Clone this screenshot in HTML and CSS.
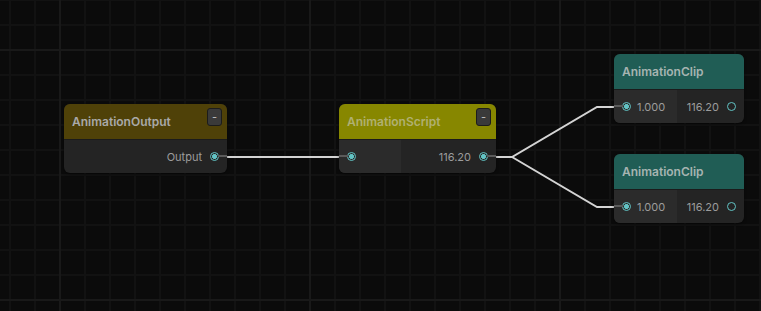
FILE: index.html
```html
<!DOCTYPE html>
<html lang="en">
<head>
    <meta charset="UTF-8">
    <meta name="viewport" content="width=device-width, initial-scale=1.0">
    <title>Animation Graph</title>
    <link rel="stylesheet" href="styles.css">
</head>
<body>
    <div class="canvas">
        <!-- Edges between ports -->
        <svg class="edges" width="761" height="311" viewBox="0 0 761 311">
            <path d="M227 157 L339 157" />
            <path d="M496 157 L512 157 L597 107 L614 107" />
            <path d="M512 157 L597 207 L614 207" />
        </svg>

        <div class="node node-output" style="left: 64px; top: 104px; width: 163px;">
            <div class="node-header">
                <span class="node-title">AnimationOutput</span>
                <button class="collapse-btn">-</button>
            </div>
            <div class="node-body">
                <div class="section section-out">
                    <span class="label">Output</span>
                    <span class="port out filled"></span>
                </div>
            </div>
        </div>

        <div class="node node-script" style="left: 339px; top: 104px; width: 157px;">
            <div class="node-header">
                <span class="node-title">AnimationScript</span>
                <button class="collapse-btn">-</button>
            </div>
            <div class="node-body">
                <div class="section section-in" style="width: 62px;">
                    <span class="port in filled"></span>
                </div>
                <div class="section section-out">
                    <span class="label">116.20</span>
                    <span class="port out filled"></span>
                </div>
            </div>
        </div>

        <div class="node node-clip" style="left: 614px; top: 54px; width: 130px;">
            <div class="node-header">
                <span class="node-title">AnimationClip</span>
            </div>
            <div class="node-body">
                <div class="section section-in" style="width: 63px;">
                    <span class="port in filled"></span>
                    <span class="label">1.000</span>
                </div>
                <div class="section section-out">
                    <span class="label">116.20</span>
                    <span class="port out"></span>
                </div>
            </div>
        </div>

        <div class="node node-clip" style="left: 614px; top: 154px; width: 130px;">
            <div class="node-header">
                <span class="node-title">AnimationClip</span>
            </div>
            <div class="node-body">
                <div class="section section-in" style="width: 63px;">
                    <span class="port in filled"></span>
                    <span class="label">1.000</span>
                </div>
                <div class="section section-out">
                    <span class="label">116.20</span>
                    <span class="port out"></span>
                </div>
            </div>
        </div>
    </div>
</body>
</html>
```

FILE: styles.css
```css
:root {
    --canvas-color: #0b0b0b;
    --grid-minor: #121212;
    --grid-major: #191919;
    --node-body: #242424;
    --node-section: #2b2b2b;
    --port-color: #62c3c4;
    --edge-color: #d4d4d4;
    --stub-color: #5a5a5a;
    --text-color: #9c9c9c;
}

* {
    margin: 0;
    padding: 0;
    box-sizing: border-box;
    font-family: Inter, 'Noto Sans', sans-serif;
}

body {
    background-color: var(--canvas-color);
    overflow: hidden;
}

.canvas {
    position: relative;
    width: 761px;
    height: 311px;
    background-color: var(--canvas-color);
    background-image:
        linear-gradient(to right, var(--grid-major) 2px, transparent 2px),
        linear-gradient(to bottom, var(--grid-major) 2px, transparent 2px),
        linear-gradient(to right, var(--grid-minor) 2px, transparent 2px),
        linear-gradient(to bottom, var(--grid-minor) 2px, transparent 2px);
    background-size: 250px 100%, 100% 250px, 25px 100%, 100% 25px;
    background-position: 59px 0, 0 49px, 9px 0, 0 -1px;
}

.edges {
    position: absolute;
    left: 0;
    top: 0;
}

.edges path {
    fill: none;
    stroke: var(--edge-color);
    stroke-width: 2;
}

.node {
    position: absolute;
    border-radius: 6px;
    background-color: var(--node-body);
    overflow: hidden;
    box-shadow: 0 1px 3px rgba(0, 0, 0, 0.5);
}

.node-header {
    display: flex;
    align-items: center;
    justify-content: space-between;
    height: 36px;
    padding: 0 5px 0 8px;
    border-bottom: 1px solid #1b1b1b;
}

.node-output .node-header {
    background-color: #4f4108;
}

.node-script .node-header {
    background-color: #878700;
}

.node-clip .node-header {
    background-color: #205d55;
}

.node-title {
    font-size: 12px;
    font-weight: 600;
    color: #a9a9a9;
}

.node-script .node-title {
    color: #b0b071;
}

.node-clip .node-title {
    color: #a6b4b1;
}

.collapse-btn {
    align-self: flex-start;
    margin-top: 4px;
    width: 15px;
    height: 18px;
    border: 1px solid #1c1c1c;
    border-radius: 3px;
    background-color: #3a3a3a;
    color: #bdbdbd;
    font-size: 11px;
    line-height: 12px;
    cursor: pointer;
}

.node-body {
    display: flex;
    height: 33px;
}

.section {
    display: flex;
    align-items: center;
    gap: 6px;
    height: 100%;
}

.section-in {
    flex-shrink: 0;
    padding-left: 8px;
    background-color: var(--node-section);
}

.section-out {
    flex: 1;
    justify-content: flex-end;
    padding-right: 8px;
    gap: 8px;
}

.label {
    font-size: 11px;
    color: var(--text-color);
}

.port {
    position: relative;
    width: 9px;
    height: 9px;
    border: 1.5px solid var(--port-color);
    border-radius: 50%;
    flex-shrink: 0;
}

.port.filled {
    background: radial-gradient(circle, var(--port-color) 0 2.2px, transparent 2.6px);
}

.port.in::before,
.port.out.filled::after {
    content: '';
    position: absolute;
    top: 2px;
    height: 2px;
    width: 9px;
    background-color: var(--stub-color);
}

.port.in::before {
    right: 100%;
}

.port.out.filled::after {
    left: 100%;
}
```
